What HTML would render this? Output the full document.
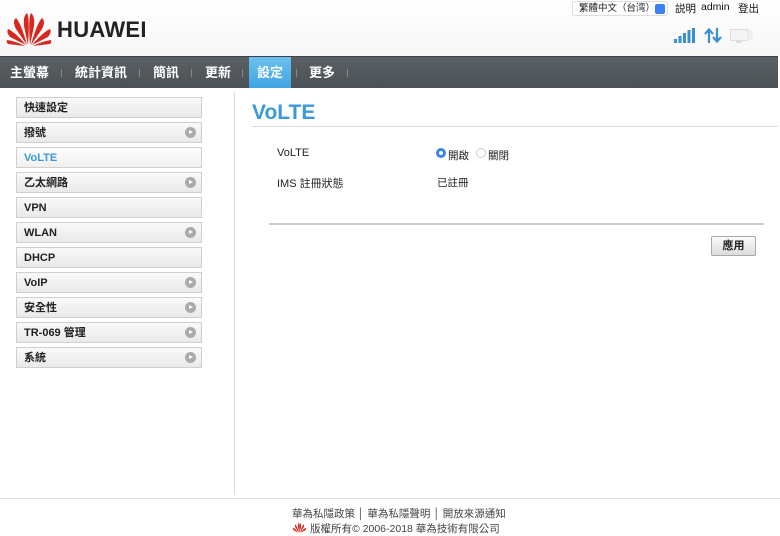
<!DOCTYPE html>
<html><head><meta charset="utf-8">
<style>
*{margin:0;padding:0;box-sizing:border-box}
body{width:780px;height:536px;background:#fff;font-family:"Liberation Sans","Noto Sans CJK TC",sans-serif;font-size:11px;color:#222;position:relative;overflow:hidden}
.hdr{position:absolute;left:0;top:0;width:780px;height:56px;background:linear-gradient(#fff,#f6f6f6)}
.brand{position:absolute;left:57px;top:17px;font-size:22px;font-weight:bold;color:#222;letter-spacing:0.3px}
.lang{position:absolute;left:572px;top:1px;width:96px;height:15px;border:1px solid #ddd;border-radius:3px;background:#fff;font-size:9.5px;padding-left:6px;line-height:13px;white-space:nowrap;overflow:hidden}
.lang i{position:absolute;right:2px;top:2px;width:10px;height:10px;background:#3b82f6;border-radius:2px}
.top{position:absolute;top:2px;font-size:10.5px;color:#111}
.nav{position:absolute;left:0;top:56px;width:778px;height:32px;background:linear-gradient(#5a6063,#4b5154);border-top:1px solid #3e4447}
.nav span{position:absolute;top:0;height:31px;line-height:31px;color:#fff;font-weight:bold;font-size:13px}
.nav .sep{width:1px;height:8px;top:12px;background:#888}
.nav .act{background:linear-gradient(#6cc1ee,#3ea5e3);padding:0 8px}
.side{position:absolute;left:16px;width:186px;height:21px;border:1px solid #cfcfcf;background:linear-gradient(#f9f9f9,#e9e9e9);font-weight:bold;font-size:11px;line-height:17px;padding-top:2px;padding-left:7px}
.side.sel{color:#3a9ad9;background:linear-gradient(#fdfdfd,#f0f0f0)}
.side b{position:absolute;right:5px;top:4px;width:11px;height:11px;border-radius:50%;background:#aaa}
.side b:after{content:"";position:absolute;left:4px;top:3px;border-left:4px solid #fff;border-top:2.5px solid transparent;border-bottom:2.5px solid transparent}
.vline{position:absolute;left:234px;top:92px;width:1px;height:402px;background:#ddd}
h1{position:absolute;left:252px;top:101px;font-size:21px;color:#3a9ad9;font-weight:bold}
.hl{position:absolute;left:252px;top:126px;width:526px;height:1px;background:#ddd}
.lbl{position:absolute;font-size:11px}
.radio{position:absolute;width:10px;height:10px;border-radius:50%}
.btn{position:absolute;left:711px;top:236px;width:45px;height:20px;border:1px solid #aaa;border-radius:2px;background:linear-gradient(#fafafa,#ddd);font-size:11px;text-align:center;line-height:18px;font-weight:bold}
.foot{position:absolute;left:0;top:498px;width:780px;height:1px;background:#ddd}
.ft{position:absolute;font-size:10.5px;color:#444}
</style></head><body>
<div class="hdr">
<svg style="position:absolute;left:5px;top:10px" width="48" height="36" viewBox="0 0 48 36">
<g fill="#d7281f">
<path d="M23 35 L19 16 Q18 6 22 3 Q25 8 23 35Z"/>
<path d="M25 35 L29 16 Q30 6 26 3 Q23 8 25 35Z"/>
<path d="M22 35 L11 19 Q7 11 11 8 Q16 13 22 35Z"/>
<path d="M26 35 L37 19 Q41 11 37 8 Q32 13 26 35Z"/>
<path d="M21 35 L5 27 Q1 22 3 19 Q10 22 21 35Z"/>
<path d="M27 35 L43 27 Q47 22 45 19 Q38 22 27 35Z"/>
<path d="M20 36 L3 34 Q1 32 2 30 Q10 31 20 36Z"/>
<path d="M28 36 L45 34 Q47 32 46 30 Q38 31 28 36Z"/>
</g></svg>
<div class="brand">HUAWEI</div>
<div class="lang">繁體中文（台湾）<i></i></div>
<span class="top" style="left:675px;top:1px">説明</span>
<span class="top" style="left:701px;top:1px">admin</span>
<span class="top" style="left:738px;top:1px">登出</span>
<svg style="position:absolute;left:674px;top:28px" width="22" height="15"><g fill="#3a8fd0"><rect x="0" y="11" width="3" height="4"/><rect x="4.5" y="8" width="3" height="7"/><rect x="9" y="5" width="3" height="10"/><rect x="13.5" y="2" width="3" height="13"/><rect x="18" y="0" width="3" height="15"/></g></svg>
<svg style="position:absolute;left:704px;top:28px" width="18" height="15"><g stroke="#3a8fd0" stroke-width="2.2" fill="none"><path d="M5 15V2M1 6L5 1.5 9 6"/><path d="M13 0V13M9 9L13 13.5 17 9"/></g></svg>
<svg style="position:absolute;left:730px;top:29px" width="24" height="15"><rect x="0.5" y="0.5" width="17" height="11" fill="#f4f4f4" stroke="#ddd"/><rect x="6" y="12" width="6" height="2" fill="#ddd"/><ellipse cx="20" cy="6" rx="3" ry="5" fill="#eee"/></svg>
</div>
<div class="nav">
<span style="left:10px">主螢幕</span><span class="sep" style="left:61px"></span>
<span style="left:75px">統計資訊</span><span class="sep" style="left:139px"></span>
<span style="left:153px">簡訊</span><span class="sep" style="left:191px"></span>
<span style="left:205px">更新</span><span class="sep" style="left:242px"></span>
<span class="act" style="left:249px">設定</span><span class="sep" style="left:296px"></span>
<span style="left:309px">更多</span><span class="sep" style="left:347px"></span>
</div>
<div class="side" style="top:97px">快速設定</div>
<div class="side" style="top:122px">撥號<b></b></div>
<div class="side sel" style="top:147px">VoLTE</div>
<div class="side" style="top:172px">乙太網路<b></b></div>
<div class="side" style="top:197px">VPN</div>
<div class="side" style="top:222px">WLAN<b></b></div>
<div class="side" style="top:247px">DHCP</div>
<div class="side" style="top:272px">VoIP<b></b></div>
<div class="side" style="top:297px">安全性<b></b></div>
<div class="side" style="top:322px">TR-069 管理<b></b></div>
<div class="side" style="top:347px">系統<b></b></div>
<div class="vline"></div>
<h1>VoLTE</h1>
<div class="hl"></div>
<div class="lbl" style="left:277px;top:147px">VoLTE</div>
<div class="lbl" style="left:277px;top:175px">IMS 註冊狀態</div>
<div class="radio" style="left:436px;top:148px;background:#3b82f6"><div style="position:absolute;left:3px;top:3px;width:4px;height:4px;border-radius:50%;background:#fff"></div></div>
<div class="lbl" style="left:448px;top:148px;font-size:10.5px">開啟</div>
<div class="radio" style="left:476px;top:148px;border:1px solid #ccc;background:#fff"></div>
<div class="lbl" style="left:488px;top:148px;font-size:10.5px">關閉</div>
<div class="lbl" style="left:437px;top:175px;font-size:10.5px">已註冊</div>
<div style="position:absolute;left:269px;top:223px;width:495px;height:2px;background:#ccc"></div>
<div class="btn">應用</div>
<div class="foot"></div>
<div class="ft" style="left:292px;top:506px">華為私隱政策 │ 華為私隱聲明 │ 開放來源通知</div>
<svg style="position:absolute;left:292px;top:522px" width="15" height="11" viewBox="0 0 48 36"><g fill="#d7281f"><path d="M23 35 L19 16 Q18 6 22 3 Q25 8 23 35Z"/><path d="M25 35 L29 16 Q30 6 26 3 Q23 8 25 35Z"/><path d="M22 35 L11 19 Q7 11 11 8 Q16 13 22 35Z"/><path d="M26 35 L37 19 Q41 11 37 8 Q32 13 26 35Z"/><path d="M21 35 L5 27 Q1 22 3 19 Q10 22 21 35Z"/><path d="M27 35 L43 27 Q47 22 45 19 Q38 22 27 35Z"/></g></svg>
<div class="ft" style="left:310px;top:521px">版權所有© 2006-2018 華為技術有限公司</div>
</body></html>
